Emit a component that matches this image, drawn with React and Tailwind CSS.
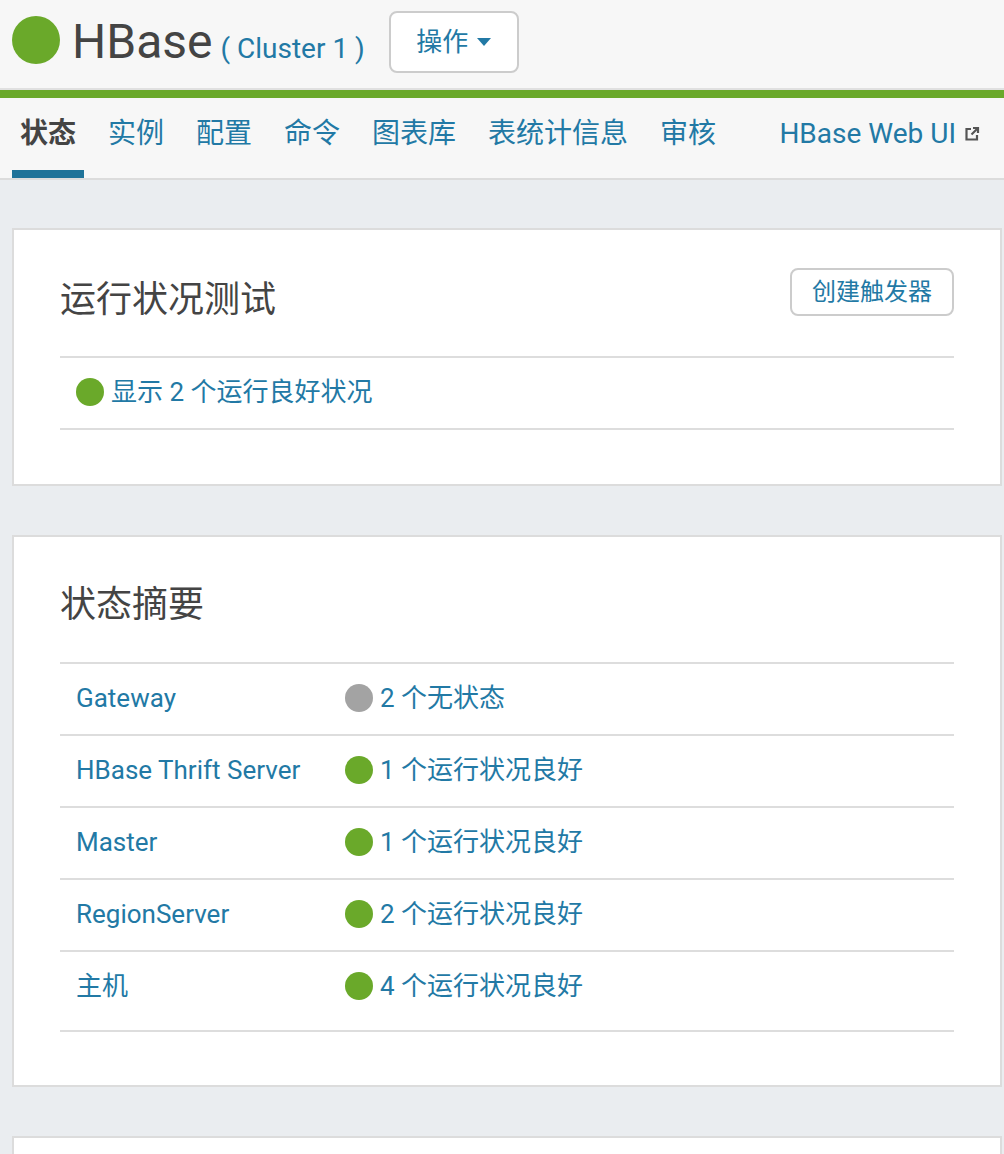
import React from 'react';

const FONT = { fontFamily: 'Roboto, "Noto Sans CJK SC", sans-serif' };

const TABS = ['状态', '实例', '配置', '命令', '图表库', '表统计信息', '审核'];

const SUMMARY = [
  { name: 'Gateway', state: 'none', text: '2 个无状态' },
  { name: 'HBase Thrift Server', state: 'good', text: '1 个运行状况良好' },
  { name: 'Master', state: 'good', text: '1 个运行状况良好' },
  { name: 'RegionServer', state: 'good', text: '2 个运行状况良好' },
  { name: '主机', state: 'good', text: '4 个运行状况良好' },
];

function Dot({ state }) {
  return (
    <span
      className={`inline-block w-[28px] h-[28px] rounded-full mr-[7px] shrink-0 ${
        state === 'good' ? 'bg-[#6aa92a]' : 'bg-[#a3a3a3]'
      }`}
    />
  );
}

function ExternalIcon() {
  return (
    <svg className="w-[16px] h-[16px] ml-[8px] text-[#555]" viewBox="0 0 16 16" fill="none" stroke="currentColor" strokeWidth="2.2">
      <path d="M7 3H2.5v10.5H13V9" strokeLinejoin="miter" />
      <path d="M9 2h5v5" />
      <path d="M14 2L7.5 8.5" />
    </svg>
  );
}

export default function App() {
  return (
    <div className="h-[1154px] overflow-hidden bg-[#eaedf0]" style={FONT}>
      {/* Header */}
      <header className="h-[88px] bg-[#f7f7f7] flex items-start pl-[12px]">
        <span className="mt-[16px] w-[48px] h-[48px] rounded-full bg-[#6aa92a] shrink-0" />
        <div className="mt-[14px] ml-[12px] flex items-baseline leading-[56px]">
          <span className="text-[48px] text-[#444]">HBase</span>
          <span className="ml-[8px] text-[28px] text-[#2279a5]">( Cluster 1 )</span>
        </div>
        <button className="mt-[11px] ml-[24px] h-[62px] w-[130px] rounded-[8px] border-2 border-[#cccccc] bg-white flex items-center justify-center text-[26px] text-[#2279a5]">
          操作
          <svg className="ml-[9px] w-[14px] h-[8px]" viewBox="0 0 14 8">
            <path d="M0 0h14L7 8z" fill="#2279a5" />
          </svg>
        </button>
      </header>
      <div className="border-t-2 border-[#e0e0e0] h-[10px] bg-[#6aa92a]" />

      {/* Tabs */}
      <nav className="h-[82px] bg-[#f7f7f7] border-b-2 border-[#dcdcdc] flex items-start pl-[12px] pr-[24px]">
        <div className="flex gap-[16px]">
          {TABS.map((t, i) => (
            <a
              key={t}
              className={`h-[80px] px-[8px] flex items-center border-b-[8px] text-[28px] ${
                i === 0 ? 'border-[#1f7399] text-[#444] font-bold' : 'border-transparent text-[#2279a5]'
              }`}
            >
              {t}
            </a>
          ))}
        </div>
        <a className="ml-auto h-[72px] flex items-center text-[28px] text-[#2279a5]">
          HBase Web UI
          <ExternalIcon />
        </a>
      </nav>

      <main className="pl-[12px] pr-[2px] pt-[48px] flex flex-col gap-[49px]">
        {/* Health tests */}
        <section className="bg-white border-2 border-[#dcdcdc] px-[46px] pt-[38px] pb-[54px]">
          <div className="flex justify-between items-start">
            <h2 className="mt-[14px] text-[36px] leading-[36px] text-[#444]">运行状况测试</h2>
            <button className="w-[164px] h-[48px] rounded-[8px] border-2 border-[#cccccc] bg-white text-[24px] text-[#2279a5] flex items-center justify-center">
              创建触发器
            </button>
          </div>
          <div className="mt-[38px] border-y-2 border-[#dddddd]">
            <div className="h-[70px] pt-[19px] pl-[16px] flex items-start">
              <div className="h-[30px] flex items-center text-[26px] leading-[30px] text-[#2279a5]">
                <Dot state="good" />
                显示 2 个运行良好状况
              </div>
            </div>
          </div>
        </section>

        {/* Status summary */}
        <section className="bg-white border-2 border-[#dcdcdc] px-[46px] pt-[50px] pb-[53px]">
          <h2 className="text-[36px] leading-[36px] text-[#444]">状态摘要</h2>
          <div className="mt-[39px] border-b-2 border-[#dddddd] pb-[8px]">
            {SUMMARY.map((r) => (
              <div key={r.name} className="h-[72px] border-t-2 border-[#dddddd] pt-[19px] flex items-start text-[26px] leading-[30px] text-[#2279a5]">
                <div className="w-[285px] pl-[16px]">{r.name}</div>
                <div className="h-[30px] flex items-center">
                  <Dot state={r.state} />
                  {r.text}
                </div>
              </div>
            ))}
          </div>
        </section>

        <section className="bg-white border-2 border-[#dcdcdc] h-[120px]" />
      </main>
    </div>
  );
}
